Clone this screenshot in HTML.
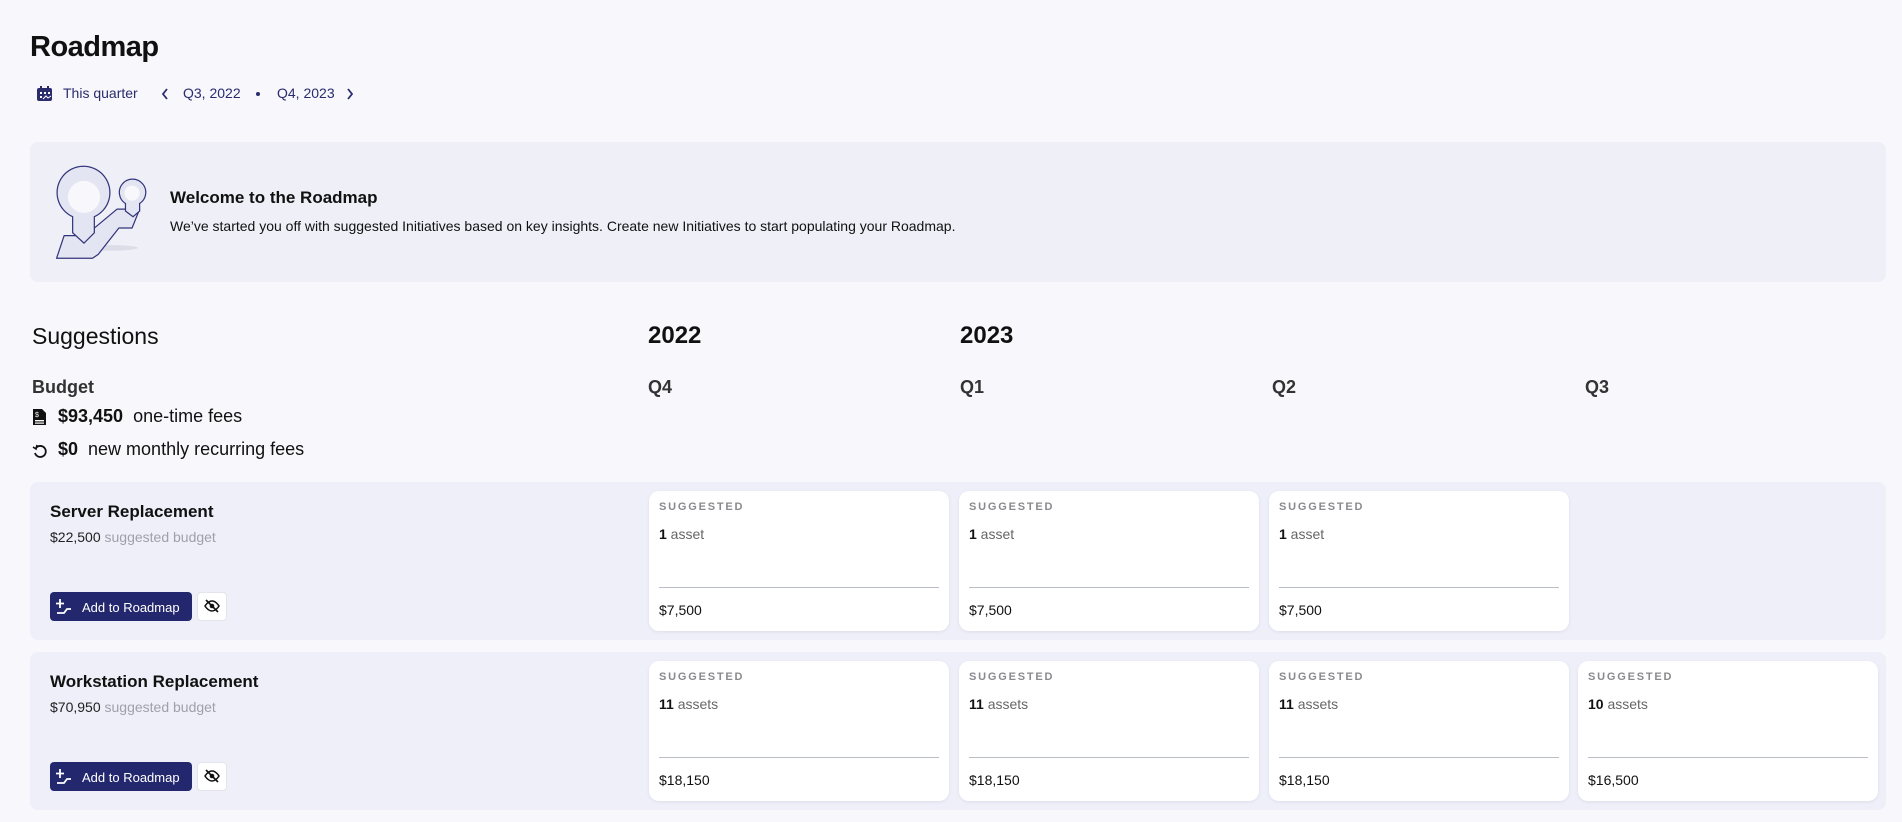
<!DOCTYPE html>
<html><head><meta charset="utf-8"><style>
*{box-sizing:border-box;margin:0;padding:0}
body{width:1902px;height:822px;background:#f7f7fc;font-family:"Liberation Sans",sans-serif;color:#111;position:relative;overflow:hidden}
.a{position:absolute;white-space:nowrap}
.nav{color:#2a2c6e;font-size:14px;top:85px}
.band{position:absolute;left:30px;width:1856px;background:#eeeff8;border-radius:8px}
.card{position:absolute;width:300px;height:140px;background:#fff;border-radius:10px;box-shadow:0 1px 3px rgba(40,40,90,.08)}
.card .s{position:absolute;left:10px;top:10px;font-size:11px;font-weight:bold;letter-spacing:1.8px;color:#8a8a8e}
.card .n{position:absolute;left:10px;top:35px;font-size:14px;color:#666}
.card .n b{color:#111}
.card .l{position:absolute;left:10px;right:10px;top:96px;border-top:1px solid #b9bec6}
.card .p{position:absolute;left:10px;top:111px;font-size:14px;color:#111}
.t{font-size:17px;font-weight:bold}
.bud{font-size:14px;color:#222}
.bud span{color:#a0a0aa}
.btn{position:absolute;width:142px;height:29px;background:#23286e;border-radius:4px;color:#fff;font-size:14px}
.eye{position:absolute;width:30px;height:29px;background:#fff;border-radius:4px;border:1px solid #e3e4ec}
.h{font-size:18px;font-weight:bold;color:#333}
</style></head><body>
<div class="a" style="left:30px;top:31px;font-size:29px;font-weight:bold;letter-spacing:-.5px">Roadmap</div>

<svg class="a" style="left:36px;top:86px" width="17" height="16" viewBox="0 0 17 16"><rect x="1" y="2" width="15" height="13" rx="2" fill="#2a2c6e"/><rect x="4" y="0" width="2" height="4" fill="#2a2c6e"/><rect x="11" y="0" width="2" height="4" fill="#2a2c6e"/><g fill="#fff"><rect x="4" y="6" width="2" height="2"/><rect x="8" y="6" width="2" height="2"/><rect x="12" y="6" width="2" height="2"/><rect x="4" y="10" width="2" height="2"/></g><path d="M7 13l3-3 2 2 3-2" stroke="#fff" fill="none" stroke-width="1"/></svg>
<div class="a nav" style="left:63px">This quarter</div>
<svg class="a" style="left:161px;top:88px" width="8" height="12" viewBox="0 0 8 12"><path d="M6 1L2 6l4 5" stroke="#2a2c6e" stroke-width="1.8" fill="none"/></svg>
<div class="a nav" style="left:183px">Q3, 2022</div>
<div class="a" style="left:256px;top:92px;width:4px;height:4px;border-radius:2px;background:#2a2c6e"></div>
<div class="a nav" style="left:277px">Q4, 2023</div>
<svg class="a" style="left:346px;top:88px" width="8" height="12" viewBox="0 0 8 12"><path d="M2 1l4 5-4 5" stroke="#2a2c6e" stroke-width="1.8" fill="none"/></svg>

<div class="band" style="top:142px;height:140px;background:#efeff8"></div>
<svg class="a" style="left:50px;top:162px" width="100" height="100" viewBox="0 -6 100 106">
<ellipse cx="60" cy="85" rx="30" ry="3" fill="#dcdde6"/>
<path d="M4 96l8-24h16l16-8 24-20h24l-8 20H70L48 92 42 96z" fill="#e4e5f2" stroke="#33357a" stroke-width="1.3" stroke-linejoin="round"/>
<path d="M21 52A28 28 0 1 1 44 52V69L33 80 21 69z" fill="#e4e5f2" stroke="#33357a" stroke-width="1.3"/>
<circle cx="33" cy="31" r="17" fill="#f7f7fc"/>
<path d="M77 38A14 14 0 1 1 92 38V46L85 52 77 46z" fill="#e4e5f2" stroke="#33357a" stroke-width="1.3"/>
<circle cx="84" cy="27" r="8" fill="#f7f7fc"/>
</svg>
<div class="a" style="left:170px;top:188px;font-size:17px;font-weight:bold">Welcome to the Roadmap</div>
<div class="a" style="left:170px;top:218px;font-size:14px">We’ve started you off with suggested Initiatives based on key insights. Create new Initiatives to start populating your Roadmap.</div>

<div class="a" style="left:32px;top:323px;font-size:23px">Suggestions</div>
<div class="a" style="left:648px;top:322px;font-size:24px;font-weight:bold">2022</div>
<div class="a" style="left:960px;top:322px;font-size:24px;font-weight:bold">2023</div>
<div class="a h" style="left:32px;top:377px">Budget</div>
<div class="a h" style="left:648px;top:377px">Q4</div>
<div class="a h" style="left:960px;top:377px">Q1</div>
<div class="a h" style="left:1272px;top:377px">Q2</div>
<div class="a h" style="left:1585px;top:377px">Q3</div>
<svg class="a" style="left:33px;top:408px" width="13" height="17" viewBox="0 0 13 17"><path d="M0 1h9l4 4v12H0z" fill="#111"/><text x="2" y="9" font-size="7" fill="#fff" font-family="Liberation Sans">$</text><rect x="2" y="12" width="9" height="1.4" fill="#fff"/><rect x="2" y="14.5" width="9" height="1.2" fill="#fff"/></svg>
<div class="a" style="left:58px;top:406px;font-size:18px"><b>$93,450</b>&nbsp; one-time fees</div>
<svg class="a" style="left:32px;top:443px" width="16" height="16" viewBox="0 0 16 16"><path d="M4 5A5.5 5.5 0 1 1 3 10" stroke="#111" stroke-width="1.8" fill="none"/><path d="M1 4l3 2 1-4" stroke="#111" stroke-width="1.6" fill="none"/></svg>
<div class="a" style="left:58px;top:439px;font-size:18px"><b>$0</b>&nbsp; new monthly recurring fees</div>

<div class="band" style="top:482px;height:158px"></div>
<div class="a t" style="left:50px;top:502px">Server Replacement</div>
<div class="a bud" style="left:50px;top:529px">$22,500 <span>suggested budget</span></div>
<div class="btn" style="left:50px;top:592px"></div>
<div class="eye" style="left:197px;top:592px"></div>

<div class="card" style="left:649px;top:491px"><div class="s">SUGGESTED</div><div class="n"><b>1</b> asset</div><div class="l"></div><div class="p">$7,500</div></div>
<div class="card" style="left:959px;top:491px"><div class="s">SUGGESTED</div><div class="n"><b>1</b> asset</div><div class="l"></div><div class="p">$7,500</div></div>
<div class="card" style="left:1269px;top:491px"><div class="s">SUGGESTED</div><div class="n"><b>1</b> asset</div><div class="l"></div><div class="p">$7,500</div></div>

<div class="band" style="top:652px;height:158px"></div>
<div class="a t" style="left:50px;top:672px">Workstation Replacement</div>
<div class="a bud" style="left:50px;top:699px">$70,950 <span>suggested budget</span></div>
<div class="btn" style="left:50px;top:762px"></div>
<div class="eye" style="left:197px;top:762px"></div>

<div class="card" style="left:649px;top:661px"><div class="s">SUGGESTED</div><div class="n"><b>11</b> assets</div><div class="l"></div><div class="p">$18,150</div></div>
<div class="card" style="left:959px;top:661px"><div class="s">SUGGESTED</div><div class="n"><b>11</b> assets</div><div class="l"></div><div class="p">$18,150</div></div>
<div class="card" style="left:1269px;top:661px"><div class="s">SUGGESTED</div><div class="n"><b>11</b> assets</div><div class="l"></div><div class="p">$18,150</div></div>
<div class="card" style="left:1578px;top:661px"><div class="s">SUGGESTED</div><div class="n"><b>10</b> assets</div><div class="l"></div><div class="p">$16,500</div></div>

<svg class="a" style="left:55px;top:598px" width="18" height="18" viewBox="0 0 18 18"><path d="M5 1v9M1 5.5h8M2 15h7l3-4h4" stroke="#fff" stroke-width="1.8" fill="none"/></svg>
<div class="a" style="left:82px;top:600px;font-size:13px;color:#fff">Add to Roadmap</div>
<svg class="a" style="left:204px;top:598px" width="16" height="16" viewBox="0 0 16 16"><path d="M1 8s3-5 7-5 7 5 7 5-3 5-7 5-7-5-7-5z" stroke="#111" stroke-width="1.5" fill="none"/><circle cx="8" cy="8" r="2.3" fill="#111"/><path d="M2 2l12 12" stroke="#111" stroke-width="1.6"/></svg>
<svg class="a" style="left:55px;top:768px" width="18" height="18" viewBox="0 0 18 18"><path d="M5 1v9M1 5.5h8M2 15h7l3-4h4" stroke="#fff" stroke-width="1.8" fill="none"/></svg>
<div class="a" style="left:82px;top:770px;font-size:13px;color:#fff">Add to Roadmap</div>
<svg class="a" style="left:204px;top:768px" width="16" height="16" viewBox="0 0 16 16"><path d="M1 8s3-5 7-5 7 5 7 5-3 5-7 5-7-5-7-5z" stroke="#111" stroke-width="1.5" fill="none"/><circle cx="8" cy="8" r="2.3" fill="#111"/><path d="M2 2l12 12" stroke="#111" stroke-width="1.6"/></svg>
</body></html>
